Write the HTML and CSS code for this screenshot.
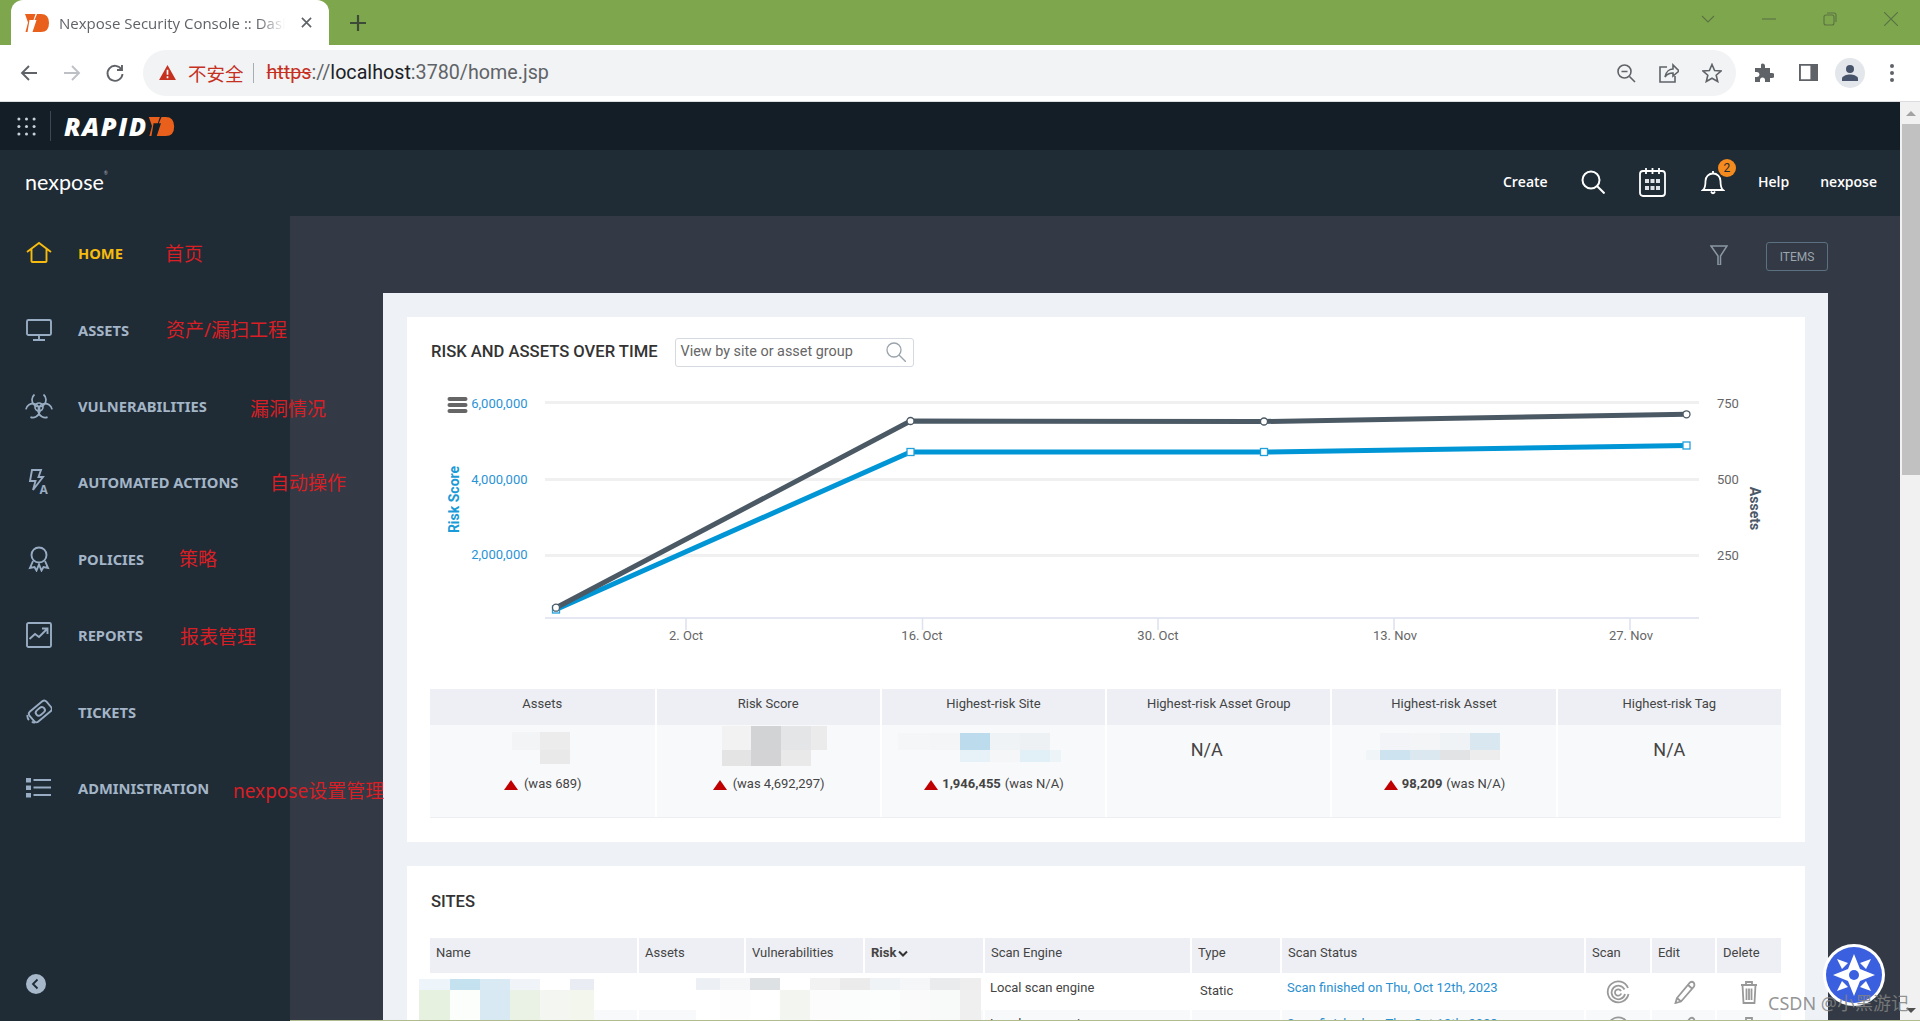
FILE: index.html
```html
<!DOCTYPE html>
<html lang="en">
<head>
<meta charset="utf-8">
<title>Nexpose Security Console :: Dashboard</title>
<link rel="stylesheet" href="styles.css">
</head>
<body>
<svg class="defs" width="0" height="0">
  <defs>
    <g id="i-r7"><path d="M0 0H10.500L8.500 6H4.500L2.500 18H0.500L3 8.500Z"/><path d="M12 0H16Q24 0 24 9T16 18H7.500L11.500 6H9.500Z"/></g>
    <g id="i-scan"><path d="M22 8A10.500 10.500 0 1 0 22.500 14M18.500 9.500A6.800 6.800 0 1 0 19 14M15 11A3.200 3.200 0 1 0 15.200 13.500"/></g>
    <g id="i-edit"><path d="M5 18L18 2.500Q20 1 21.500 2.500T22 6.500L9 21.500L3.500 23ZM5 18L9 21.500M16 5L20 8.500"/></g>
    <g id="i-trash"><path d="M4 5H20M9 5V2H15V5M5.500 5L6.500 23H17.500L18.500 5M9.500 8.500V20M12 8.500V20M14.500 8.500V20"/></g>
    <path id="i-lobe" d="M10.500 1.500A7 7 0 1 0 19.500 1.500"/>
  </defs>
</svg>
<header class="tabstrip">
  <div class="tab">
    <svg class="favicon" viewBox="0 0 24 18"><use href="#i-r7"/></svg>
    <span class="tab-title">Nexpose Security Console :: Dashboard</span>
    <svg class="tab-close" viewBox="0 0 12 12"><path d="M1 1L11 11M11 1L1 11"/></svg>
  </div>
  <svg class="tab-new" viewBox="0 0 16 16"><path d="M8 0V16M0 8H16"/></svg>
  <div class="win-controls">
    <svg viewBox="0 0 14 14"><path d="M1 4L7 10L13 4"/></svg>
    <svg viewBox="0 0 14 14"><path d="M0 7H14"/></svg>
    <svg viewBox="0 0 14 14"><rect x="1" y="3" width="10" height="10" rx="2"/><path d="M4 1H11Q13 1 13 3V10"/></svg>
    <svg viewBox="0 0 14 14"><path d="M0 0L14 14M14 0L0 14"/></svg>
  </div>
</header>
<div class="toolbar">
  <svg class="tb-icon" viewBox="0 0 20 20"><path d="M18 10H3M10 3L3 10L10 17"/></svg>
  <svg class="tb-icon tb-off" viewBox="0 0 20 20"><path d="M2 10H17M10 3L17 10L10 17"/></svg>
  <svg class="tb-icon" viewBox="0 0 20 20"><path d="M16.500 6.500A7.500 7.500 0 1 0 17.500 11M17 2V7H12"/></svg>
  <div class="omnibox">
    <svg class="warn" viewBox="0 0 18 16"><path d="M9 0L18 16H0Z"/><path class="warn-mark" d="M9 5V10.500M9 12V14"/></svg>
    <span class="insecure">不安全</span>
    <span class="omni-sep"></span>
    <span class="url"><span class="url-https">https</span>://<span class="url-host">localhost</span>:3780/home.jsp</span>
    <div class="omni-actions">
      <svg viewBox="0 0 20 20"><circle cx="8.500" cy="8.500" r="6.500"/><path d="M13.500 13.500L19 19M5.500 8.500H11.500"/></svg>
      <svg viewBox="0 0 20 20"><path d="M8 4H1V19H16V13M6 14C7 8 11 6 14 6V2L20 8L14 13V10C11 10 8 11 6 14Z"/></svg>
      <svg viewBox="0 0 20 20"><path d="M10 1.500L12.600 7.500L19 8L14.200 12.200L15.700 18.500L10 15.200L4.300 18.500L5.800 12.200L1 8L7.400 7.500Z"/></svg>
    </div>
  </div>
  <svg class="ext" viewBox="0 0 20 20"><path d="M7 1.500A2.200 2.200 0 0 1 11 3V5H16V10H18A2.500 2.500 0 0 1 18 15H16V19H11V17A2.500 2.500 0 0 0 6 17V19H1V14H3A2.500 2.500 0 0 0 3 9H1V5H7Z"/></svg>
  <svg class="sidepanel-icon" viewBox="0 0 20 20"><path fill-rule="evenodd" d="M0 1H20V19H0ZM2 3V17H12V3Z"/></svg>
  <div class="avatar"><svg viewBox="0 0 20 20"><circle cx="10" cy="6" r="4"/><path d="M2 18V15.500C2 13 7 11.500 10 11.500S18 13 18 15.500V18Z"/></svg></div>
  <svg class="dots" viewBox="0 0 4 20"><circle cx="2" cy="3" r="2"/><circle cx="2" cy="10" r="2"/><circle cx="2" cy="17" r="2"/></svg>
</div>

<div class="viewport">
  <div class="page">
    <div class="topbar">
      <svg class="grid-icon" viewBox="0 0 20 20"><g><circle cx="2" cy="2" r="1.600"/><circle cx="10" cy="2" r="1.600"/><circle cx="18" cy="2" r="1.600"/><circle cx="2" cy="10" r="1.600"/><circle cx="10" cy="10" r="1.600"/><circle cx="18" cy="10" r="1.600"/><circle cx="2" cy="18" r="1.600"/><circle cx="10" cy="18" r="1.600"/><circle cx="18" cy="18" r="1.600"/></g></svg>
      <span class="topbar-sep"></span>
      <span class="rapid">RAPID</span>
      <svg class="rapid-mark" viewBox="0 0 24 18"><use href="#i-r7"/></svg>
    </div>
    <div class="navbar">
      <span class="brand">nexpose<sup class="brand-r">®</sup></span>
      <div class="nav-right">
        <span class="nav-text nav-create">Create</span>
        <svg class="nav-search" viewBox="0 0 24 24"><circle cx="10" cy="10" r="8.500"/><path d="M16 16L23.500 23.500"/></svg>
        <svg class="nav-cal" viewBox="0 0 27 29"><rect x="1" y="3" width="25" height="25" rx="3"/><path d="M7 0V6M13.500 0V6M20 0V6"/><g class="cal-cells"><rect x="6" y="11" width="4" height="4"/><rect x="11.500" y="11" width="4" height="4"/><rect x="17" y="11" width="4" height="4"/><rect x="6" y="18" width="4" height="4"/><rect x="11.500" y="18" width="4" height="4"/><rect x="17" y="18" width="4" height="4"/></g></svg>
        <div class="bell-wrap">
          <svg class="nav-bell" viewBox="0 0 24 25"><path d="M2 20C4.500 18 4.500 15 4.500 11A7.500 7.500 0 0 1 19.500 11C19.500 15 19.500 18 22 20ZM12 1V3.500M10 21.500Q12 25 14 21.500"/></svg>
          <span class="bell-badge">2</span>
        </div>
        <span class="nav-text nav-help">Help</span>
        <span class="nav-text nav-user">nexpose</span>
      </div>
    </div>
    <div class="body-row">
      <aside class="sidebar">
        <nav class="side-nav">
          <a class="side-item side-active">
            <svg class="side-icon" viewBox="0 0 26 24"><path d="M1 11L13 2L25 11M5.500 8V20.500Q5.500 21 6.500 21H19.500Q20.500 21 20.500 20.500V8"/></svg>
            <span>HOME</span><span class="note note-home">首页</span>
          </a>
          <a class="side-item">
            <svg class="side-icon" viewBox="0 0 26 24"><rect x="1" y="2" width="24" height="15" rx="1.500"/><path d="M13 17V21M7 22H19"/></svg>
            <span>ASSETS</span><span class="note note-assets">资产/漏扫工程</span>
          </a>
          <a class="side-item">
            <svg class="side-icon side-bio" viewBox="0 0 30 26"><circle cx="15" cy="14" r="4"/><use href="#i-lobe"/><use href="#i-lobe" transform="rotate(120 15 14)"/><use href="#i-lobe" transform="rotate(240 15 14)"/></svg>
            <span>VULNERABILITIES</span><span class="note note-vuln">漏洞情况</span>
          </a>
          <a class="side-item">
            <svg class="side-icon" viewBox="0 0 26 26"><path d="M6 1H15L12.500 8H17L7 21L9.500 12H4Z"/><text class="icon-a" x="13.500" y="25">A</text></svg>
            <span>AUTOMATED ACTIONS</span><span class="note note-auto">自动操作</span>
          </a>
          <a class="side-item">
            <svg class="side-icon" viewBox="0 0 26 26"><circle cx="13" cy="9" r="7.500"/><path d="M7 15L4 22L8.500 21L10.500 24.500L13 18.500L15.500 24.500L17.500 21L22 22L19 15"/></svg>
            <span>POLICIES</span><span class="note note-pol">策略</span>
          </a>
          <a class="side-item">
            <svg class="side-icon" viewBox="0 0 26 26"><rect x="1" y="1" width="24" height="24" rx="1.500"/><path d="M3.500 17L9 12L13 15L21 7M16 6.500H21.500V12"/></svg>
            <span>REPORTS</span><span class="note note-rep">报表管理</span>
          </a>
          <a class="side-item">
            <svg class="side-icon" viewBox="0 0 26 24"><g transform="rotate(-40 14 11)"><rect x="3" y="5" width="22" height="13" rx="3"/><rect x="9" y="8.500" width="10" height="6" rx="3"/></g><path d="M1.500 15Q1 18 3 20M6 21.500Q7 23 9 22.500"/></svg>
            <span>TICKETS</span>
          </a>
          <a class="side-item">
            <svg class="side-icon side-admin" viewBox="0 0 26 20"><rect x="0" y="0" width="5" height="4.500"/><rect x="0" y="7.500" width="5" height="4.500"/><rect x="0" y="15" width="5" height="4.500"/><rect x="7.500" y="1" width="17.500" height="2"/><rect x="7.500" y="8.500" width="17.500" height="2"/><rect x="7.500" y="16" width="17.500" height="2"/></svg>
            <span>ADMINISTRATION</span><span class="note note-admin">nexpose设置管理</span>
          </a>
        </nav>
        <button class="collapse"><svg viewBox="0 0 20 20"><path d="M11.500 5.500L7 10L11.500 14.500"/></svg></button>
      </aside>

      <main class="content">
        <div class="content-tools">
          <svg class="filter" viewBox="0 0 18 20"><path d="M1 1H17L10.500 11V20H8V11Z"/></svg>
          <button class="items-btn">ITEMS</button>
        </div>
        <div class="panel">
          <section class="card card-risk">
            <div class="risk-head">
              <h2 class="card-title">RISK AND ASSETS OVER TIME</h2>
              <div class="site-search">
                <span>View by site or asset group</span>
                <svg viewBox="0 0 20 20"><circle cx="8" cy="8" r="7"/><path d="M13 13L20 20"/></svg>
              </div>
            </div>
            <svg class="chart" viewBox="407 367 1398 322" width="1398" height="322">
              <g class="grid">
                <path d="M545 402.500H1699M545 479.500H1699M545 555.500H1699"/>
              </g>
              <path class="axis" d="M545 618H1699M686 618V630M922.500 618V630M1158 618V630M1394 618V630M1630 618V630"/>
              <g class="hamburger">
                <rect x="447.500" y="397" width="20" height="4" rx="2"/>
                <rect x="447.500" y="403" width="20" height="4" rx="2"/>
                <rect x="447.500" y="409" width="20" height="4" rx="2"/>
              </g>
              <g class="y-left">
                <text x="527.500" y="408">6,000,000</text>
                <text x="527.500" y="483.500">4,000,000</text>
                <text x="527.500" y="558.500">2,000,000</text>
              </g>
              <g class="y-right">
                <text x="1717" y="408">750</text>
                <text x="1717" y="484">500</text>
                <text x="1717" y="560">250</text>
              </g>
              <g class="x-labels">
                <text x="686" y="640">2. Oct</text>
                <text x="922" y="640">16. Oct</text>
                <text x="1158" y="640">30. Oct</text>
                <text x="1395" y="640">13. Nov</text>
                <text x="1631" y="640">27. Nov</text>
              </g>
              <text class="title-risk" transform="translate(459 499.500) rotate(-90)">Risk Score</text>
              <text class="title-assets" transform="translate(1750 508.500) rotate(90)">Assets</text>
              <path class="line-blue" d="M556 609.500L910.500 452L1264 452L1686.500 445.500"/>
              <path class="line-dark" d="M556 607.700L910.500 421L1264 421.500L1686.500 414.300"/>
              <g class="mk-blue">
                <rect x="552.500" y="606" width="7" height="7"/>
                <rect x="907" y="448.500" width="7" height="7"/>
                <rect x="1260.500" y="448.500" width="7" height="7"/>
                <rect x="1683" y="442" width="7" height="7"/>
              </g>
              <g class="mk-dark">
                <circle cx="556" cy="607.700" r="3.500"/>
                <circle cx="910.500" cy="421" r="3.500"/>
                <circle cx="1264" cy="421.500" r="3.500"/>
                <circle cx="1686.500" cy="414.300" r="3.500"/>
              </g>
            </svg>
            <div class="stats">
              <div class="stat">
                <div class="stat-head">Assets</div>
                <div class="stat-body">
                  <svg class="mosaic mosaic-a" viewBox="0 0 58 32"><rect width="28" height="18" fill="#f3f4f5"/><rect x="28" width="30" height="18" fill="#ececed"/><rect x="28" y="18" width="30" height="14" fill="#e9e9ea"/></svg>
                  <div class="delta"><i class="up"></i><span>(was 689)</span></div>
                </div>
              </div>
              <div class="stat">
                <div class="stat-head">Risk Score</div>
                <div class="stat-body">
                  <svg class="mosaic mosaic-b" viewBox="0 0 105 40"><rect width="29" height="24" fill="#f2f2f3"/><rect x="29" width="30" height="24" fill="#d2d3d5"/><rect x="59" width="30" height="24" fill="#e4e5e6"/><rect x="89" width="16" height="24" fill="#ebebec"/><rect y="24" width="29" height="16" fill="#e4e4e5"/><rect x="29" y="24" width="30" height="16" fill="#d3d3d5"/><rect x="59" y="24" width="30" height="16" fill="#e9e9ea"/></svg>
                  <div class="delta"><i class="up"></i><span>(was 4,692,297)</span></div>
                </div>
              </div>
              <div class="stat">
                <div class="stat-head">Highest-risk Site</div>
                <div class="stat-body">
                  <svg class="mosaic mosaic-c" viewBox="0 0 163 29"><rect width="32" height="17" fill="#f5f6f7"/><rect x="32" width="30" height="17" fill="#f4f5f7"/><rect x="62" width="30" height="17" fill="#bcdcee"/><rect x="92" width="30" height="17" fill="#f0f3f5"/><rect x="122" width="30" height="17" fill="#eef1f3"/><rect x="32" y="17" width="30" height="12" fill="#f7f9fb"/><rect x="62" y="17" width="30" height="12" fill="#e6f2f7"/><rect x="92" y="17" width="30" height="12" fill="#f4f6f8"/><rect x="122" y="17" width="30" height="12" fill="#e1eff6"/><rect x="152" y="17" width="11" height="12" fill="#ecf4f8"/></svg>
                  <div class="delta"><i class="up"></i><b>1,946,455</b><span>(was N/A)</span></div>
                </div>
              </div>
              <div class="stat">
                <div class="stat-head">Highest-risk Asset Group</div>
                <div class="stat-body stat-na stat-na-left">N/A</div>
              </div>
              <div class="stat">
                <div class="stat-head">Highest-risk Asset</div>
                <div class="stat-body">
                  <svg class="mosaic mosaic-d" viewBox="0 0 134 27"><rect x="14" width="30" height="17" fill="#f2f4f7"/><rect x="44" width="30" height="17" fill="#f4f5f7"/><rect x="74" width="30" height="17" fill="#eff3f6"/><rect x="104" width="30" height="17" fill="#d9e7f1"/><rect y="17" width="14" height="10" fill="#f0f5f8"/><rect x="14" y="17" width="30" height="10" fill="#cde3ef"/><rect x="44" y="17" width="30" height="10" fill="#dbe8f0"/><rect x="74" y="17" width="30" height="10" fill="#e2e3e4"/><rect x="104" y="17" width="30" height="10" fill="#ededee"/></svg>
                  <div class="delta"><i class="up"></i><b>98,209</b><span>(was N/A)</span></div>
                </div>
              </div>
              <div class="stat">
                <div class="stat-head">Highest-risk Tag</div>
                <div class="stat-body stat-na">N/A</div>
              </div>
            </div>
          </section>

          <section class="card card-sites">
            <h2 class="card-title sites-title">SITES</h2>
            <div class="sites">
              <div class="th">Name</div>
              <div class="th">Assets</div>
              <div class="th">Vulnerabilities</div>
              <div class="th th-sort">Risk<svg viewBox="0 0 10 8"><path d="M1 1.500L5 5.500L9 1.500"/></svg></div>
              <div class="th">Scan Engine</div>
              <div class="th">Type</div>
              <div class="th">Scan Status</div>
              <div class="th">Scan</div>
              <div class="th">Edit</div>
              <div class="th">Delete</div>

              <div class="td"></div><div class="td"></div><div class="td"></div><div class="td"></div>
              <div class="td td-top">Local scan engine</div>
              <div class="td td-low">Static</div>
              <div class="td td-top"><a class="link">Scan finished on Thu, Oct 12th, 2023</a></div>
              <div class="td td-icon"><svg class="act" viewBox="0 0 24 24"><use href="#i-scan"/></svg></div>
              <div class="td td-icon"><svg class="act" viewBox="0 0 24 24"><use href="#i-edit"/></svg></div>
              <div class="td td-icon"><svg class="act" viewBox="0 0 24 24"><use href="#i-trash"/></svg></div>

              <div class="td alt"></div><div class="td alt"></div><div class="td alt"></div><div class="td alt"></div>
              <div class="td alt td-top">Local scan engine</div>
              <div class="td alt td-low">Static</div>
              <div class="td alt td-top"><a class="link">Scan finished on Thu, Oct 12th, 2023</a></div>
              <div class="td alt td-icon"><svg class="act" viewBox="0 0 24 24"><use href="#i-scan"/></svg></div>
              <div class="td alt td-icon"><svg class="act" viewBox="0 0 24 24"><use href="#i-edit"/></svg></div>
              <div class="td alt td-icon"><svg class="act" viewBox="0 0 24 24"><use href="#i-trash"/></svg></div>

              <svg class="blur blur-name" viewBox="0 0 175 41"><rect width="31" height="11" fill="#eef5fa"/><rect x="31" width="30" height="11" fill="#c4e1f0"/><rect x="61" width="30" height="11" fill="#d9eaf5"/><rect x="91" width="30" height="11" fill="#f0f4f8"/><rect x="151" width="24" height="11" fill="#e9edf3"/><rect y="11" width="31" height="30" fill="#e7f1e0"/><rect x="31" y="11" width="30" height="30" fill="#fcfefc"/><rect x="61" y="11" width="30" height="30" fill="#d8e9f4"/><rect x="91" y="11" width="30" height="30" fill="#eaf2e6"/><rect x="121" y="11" width="30" height="30" fill="#f4f7f1"/><rect x="151" y="11" width="24" height="30" fill="#f3f6ec"/></svg>
              <svg class="blur blur-vals" viewBox="0 0 285 42"><rect width="24" height="12" fill="#eceff3"/><rect x="24" width="30" height="12" fill="#f5f6f8"/><rect x="54" width="30" height="12" fill="#dee1e4"/><rect x="84" width="30" height="12" fill="#fff"/><rect x="114" width="30" height="12" fill="#f2f2f3"/><rect x="144" width="30" height="12" fill="#ebebec"/><rect x="174" width="30" height="12" fill="#f0f3f6"/><rect x="204" width="30" height="12" fill="#f5f6f8"/><rect x="234" width="30" height="12" fill="#eaebec"/><rect x="264" width="21" height="12" fill="#eeeeef"/><rect y="12" width="54" height="30" fill="#fff"/><rect x="24" y="12" width="30" height="30" fill="#fdfdfe"/><rect x="54" y="12" width="30" height="30" fill="#fff"/><rect x="84" y="12" width="30" height="30" fill="#f3f6f0"/><rect x="114" y="12" width="30" height="30" fill="#fcfcfc"/><rect x="144" y="12" width="30" height="30" fill="#fbfcfc"/><rect x="174" y="12" width="30" height="30" fill="#fcfdfd"/><rect x="204" y="12" width="30" height="30" fill="#fafafa"/><rect x="234" y="12" width="30" height="30" fill="#f8f9f9"/><rect x="264" y="12" width="21" height="30" fill="#efefef"/></svg>
            </div>
          </section>
        </div>
      </main>
    </div>
  </div>
  <div class="scrollbar">
    <i class="sb-up"></i>
    <div class="sb-thumb"></div>
    <i class="sb-down"></i>
  </div>
</div>

<div class="float-badge">
  <svg viewBox="-31 -31 62 62"><circle r="31" fill="#fff"/><circle r="28" fill="#3a5fdf"/><path fill="#fff" d="M0-21L6-6L21 0L6 6L0 21L-6 6L-21 0L-6-6Z"/><g fill="#fff"><path d="M-17-16L-6-12L-12-6Z"/><path d="M17-16L6-12L12-6Z"/><path d="M-17 16L-6 12L-12 6Z"/><path d="M17 16L6 12L12 6Z"/></g><circle r="5" fill="#3a5fdf"/></svg>
</div>
<div class="watermark">CSDN @小黑游记</div>
<div class="bottom-edge"></div>
</body>
</html>
```

FILE: styles.css
```css
* { box-sizing: border-box; }
html, body { margin: 0; padding: 0; }
body {
  width: 1920px;
  height: 1021px;
  overflow: hidden;
  position: relative;
  background: #fff;
  font-family: Roboto, "Liberation Sans", sans-serif;
  color: #444;
}
svg { display: block; flex: none; }
.defs { position: absolute; }

/* browser chrome */
.tabstrip {
  height: 45px;
  background: #7ea64d;
  display: flex;
  align-items: center;
  position: relative;
}
.tab {
  margin-left: 11px;
  width: 318px;
  height: 45px;
  background: #fff;
  border-radius: 12px 12px 0 0;
  display: flex;
  align-items: center;
  padding-left: 14px;
}
.favicon { width: 24px; height: 18px; fill: #e8601c; }
.tab-title {
  margin-left: 10px;
  width: 226px;
  font: 15px "Open Sans", sans-serif;
  color: #5f6368;
  white-space: nowrap;
  overflow: hidden;
  -webkit-mask-image: linear-gradient(to right, #000 88%, transparent 100%);
  mask-image: linear-gradient(to right, #000 88%, transparent 100%);
}
.tab-close { width: 11px; height: 11px; margin-left: 16px; fill: none; stroke: #5f6368; stroke-width: 1.800; }
.tab-new { width: 16px; height: 16px; margin-left: 21px; fill: none; stroke: #3d4a38; stroke-width: 2.200; }
.win-controls {
  position: absolute;
  right: 22px;
  top: 12px;
  display: flex;
  gap: 47px;
}
.win-controls svg { width: 14px; height: 14px; fill: none; stroke: #5a7245; stroke-width: 1.100; }

.toolbar {
  height: 57px;
  background: #fff;
  border-bottom: 1px solid #dadce0;
  display: flex;
  align-items: center;
  padding: 0 0 1px 19px;
}
.tb-icon { width: 20px; height: 20px; margin-right: 23px; fill: none; stroke: #5f6368; stroke-width: 1.900; }
.tb-off { stroke: #bdc1c6; }
.omnibox {
  margin-left: -5px;
  width: 1593px;
  height: 46px;
  background: #f1f3f4;
  border-radius: 23px;
  display: flex;
  align-items: center;
  padding-left: 16px;
}
.warn { width: 17px; height: 15px; fill: #c5301f; }
.warn-mark { stroke: #fff; stroke-width: 1.800; fill: none; }
.insecure { margin-left: 12px; font: 18.500px "Noto Sans CJK SC", sans-serif; color: #c5301f; line-height: 24px; }
.omni-sep { width: 1px; height: 20px; background: #a9acb0; margin-left: 9px; }
.url { margin-left: 13px; font: 19.700px Roboto, sans-serif; color: #5f6368; white-space: nowrap; }
.url-https { color: #c5301f; text-decoration: line-through; }
.url-host { color: #202124; }
.omni-actions {
  margin-left: auto;
  display: flex;
  gap: 23px;
  padding-right: 14px;
}
.omni-actions svg { width: 20px; height: 20px; fill: none; stroke: #5f6368; stroke-width: 1.600; }
.ext { width: 20px; height: 20px; margin-left: 18px; fill: #5f6368; }
.sidepanel-icon { width: 19px; height: 19px; margin-left: 25px; fill: #5f6368; }
.avatar {
  width: 30px;
  height: 30px;
  border-radius: 50%;
  background: #e3e6ea;
  margin-left: 17px;
  display: flex;
  align-items: center;
  justify-content: center;
}
.avatar svg { width: 20px; height: 20px; fill: #47536a; }
.dots { width: 4px; height: 20px; margin-left: 25px; fill: #5f6368; }

/* page */
.viewport { display: flex; height: 919px; overflow: hidden; }
.page { width: 1900px; display: flex; flex-direction: column; }
.topbar {
  height: 48px;
  flex: none;
  background: #141e27;
  display: flex;
  align-items: center;
  padding-left: 17px;
}
.grid-icon { width: 19px; height: 19px; fill: #c9d1d8; }
.topbar-sep { width: 1px; height: 30px; background: #3d4852; margin-left: 14px; }
.rapid {
  margin-left: 13px;
  font: italic 800 25.500px "Open Sans", sans-serif;
  color: #fff;
  letter-spacing: 1.500px;
}
.rapid-mark { width: 27px; height: 19px; fill: #e8601c; }

.navbar {
  height: 66px;
  flex: none;
  background: #1f2b35;
  display: flex;
  align-items: center;
  padding-left: 25px;
}
.brand { font: 400 21.500px Lato, sans-serif; color: #fff; display: flex; margin-top: -2px; }
.brand-r { font-size: 5px; line-height: 8px; color: #aab; }
.nav-right { margin: -2px 0 0 auto; display: flex; align-items: center; color: #fff; font: 600 14px "Open Sans", sans-serif; }
.nav-text { margin-bottom: 2px; }
.nav-create { width: 44px; white-space: nowrap; }
.nav-search { width: 24px; height: 24px; margin-left: 34px; fill: none; stroke: #fff; stroke-width: 2; }
.nav-cal { width: 27px; height: 29px; margin-left: 34px; fill: none; stroke: #fff; stroke-width: 1.800; }
.cal-cells rect { fill: #dfe3e7; stroke: none; }
.bell-wrap { position: relative; margin-left: 35px; }
.nav-bell { width: 24px; height: 25px; fill: none; stroke: #fff; stroke-width: 1.800; }
.bell-badge {
  position: absolute;
  left: 17px;
  top: -11px;
  width: 18px;
  height: 18px;
  border-radius: 50%;
  background: #f58a1f;
  color: #1f2b35;
  font: 400 12px/18px Roboto, sans-serif;
  text-align: center;
}
.nav-help { margin-left: 33px; }
.nav-user { margin-left: 31px; margin-right: 23px; }

.body-row { flex: 1; display: flex; min-height: 0; }
.sidebar {
  width: 290px;
  flex: none;
  background: #1f2b35;
  display: flex;
  flex-direction: column;
  position: relative;
  z-index: 2;
}
.side-nav { display: flex; flex-direction: column; }
.side-item {
  height: 76.400px;
  display: flex;
  align-items: center;
  padding: 0 0 2px 26px;
  color: #a3b5c7;
  font: 700 14.700px "Noto Sans", sans-serif;
  position: relative;
  white-space: nowrap;
}
.side-icon {
  width: 26px;
  height: 26px;
  margin-right: 26px;
  fill: none;
  stroke: #98adc3;
  stroke-width: 1.900;
}
.side-bio { width: 30px; margin-left: -2px; margin-right: 24px; stroke-width: 1.700; }
.side-admin { height: 20px; fill: #98adc3; stroke: none; }
.icon-a { font: 700 12px "Noto Sans", sans-serif; fill: #98adc3; stroke: none; }
.side-active { color: #f6bb0e; }
.side-active .side-icon { stroke: #f6bb0e; }
.note {
  position: absolute;
  top: 50%;
  transform: translateY(-50%);
  font: 400 19px/26px "Noto Sans", "Noto Sans CJK SC", sans-serif;
  color: #d81f26;
}
.note-home { left: 165px; }
.note-assets { left: 166px; margin-top: -1px; }
.note-vuln { left: 250px; margin-top: 2px; }
.note-auto { left: 270px; }
.note-pol { left: 179px; margin-top: -1px; }
.note-rep { left: 180px; margin-top: 1px; }
.note-admin { left: 233px; margin-top: 2px; }
.collapse {
  margin: auto 0 27px 26px;
  width: 20px;
  height: 20px;
  border: 0;
  padding: 0;
  border-radius: 50%;
  background: #a6b8c9;
}
.collapse svg { width: 20px; height: 20px; fill: none; stroke: #1f2b35; stroke-width: 1.800; }

.content { flex: 1; background: #333a45; display: flex; flex-direction: column; min-width: 0; }
.content-tools {
  height: 77px;
  flex: none;
  display: flex;
  padding: 26px 72px 0 0;
  justify-content: flex-end;
  align-items: flex-start;
}
.filter { width: 18px; height: 20px; margin: 3px 38px 0 0; fill: none; stroke: #8b98a3; stroke-width: 1.500; }
.items-btn {
  width: 62px;
  height: 29px;
  border: 1px solid #5b7080;
  border-radius: 3px;
  background: transparent;
  color: #9aa5ae;
  font: 12px Roboto, sans-serif;
  padding: 0;
}
.panel {
  width: 1445px;
  margin-left: 93px;
  background: #eef1f5;
  padding: 24px 23px 0 24px;
  flex: 1;
}
.card { background: #fff; }
.card-risk { height: 525px; margin-bottom: 24px; }
.card-title { margin: 0; font: 500 16.600px/20px Roboto, sans-serif; color: #333; white-space: nowrap; }
.risk-head { display: flex; align-items: center; height: 50px; padding: 21px 0 0 24px; }
.risk-head .card-title { margin-top: -1px; }
.site-search {
  margin-left: 17px;
  width: 239px;
  height: 29px;
  border: 1px solid #d5d9e0;
  border-radius: 3px;
  display: flex;
  align-items: center;
  padding: 0 7px 2px 5px;
  font-size: 14.400px;
  color: #666;
}
.site-search svg { margin-left: auto; width: 20px; height: 20px; fill: none; stroke: #9aa3ab; stroke-width: 1.300; }

.chart { overflow: visible; }
.grid path { fill: none; stroke: #f0f0f0; stroke-width: 3; }
.axis { fill: none; stroke: #dde1f0; stroke-width: 1.500; }
.hamburger rect { fill: #666; }
.y-left text { font: 13px Roboto, sans-serif; fill: #2a93d5; text-anchor: end; }
.y-right text { font: 13px Roboto, sans-serif; fill: #666; }
.x-labels text { font: 13px Roboto, sans-serif; fill: #666; text-anchor: middle; }
.title-risk { font: 700 14px Roboto, sans-serif; fill: #1a9ad6; text-anchor: middle; }
.title-assets { font: 700 14px Roboto, sans-serif; fill: #4a5866; text-anchor: middle; }
.line-blue { fill: none; stroke: #0096d6; stroke-width: 5; }
.line-dark { fill: none; stroke: #4b5965; stroke-width: 5; }
.mk-blue rect { fill: #fff; stroke: #22a0da; stroke-width: 1.300; }
.mk-dark circle { fill: #fff; stroke: #4b5965; stroke-width: 1.300; }

.stats {
  margin: 0 24px 0 23px;
  display: grid;
  grid-template-columns: 224.500px repeat(5, 1fr);
  gap: 0 2px;
  height: 129px;
  border-bottom: 1px solid #edeff3;
}
.stat { display: flex; flex-direction: column; }
.stat-head {
  height: 36px;
  flex: none;
  background: #edeff4;
  font-size: 13px;
  line-height: 30px;
  text-align: center;
  color: #444;
}
.stat-body { flex: 1; background: #f8f9fb; position: relative; text-align: center; }
.stat-na { font-size: 18px; line-height: 50px; color: #444; }
.stat-na-left { padding-right: 24px; }
.mosaic { position: absolute; left: 50%; top: 8px; }
.mosaic-a { width: 58px; height: 32px; top: 7px; margin-left: -30px; }
.mosaic-b { width: 105px; height: 40px; top: 1px; margin-left: -46px; }
.mosaic-c { width: 163px; height: 29px; margin-left: -95px; }
.mosaic-d { width: 134px; height: 27px; margin-left: -78px; }
.delta {
  position: absolute;
  left: 1px;
  right: 0;
  top: 50px;
  display: flex;
  justify-content: center;
  align-items: center;
  gap: 4px;
  font-size: 13px;
  line-height: 18px;
  color: #444;
}
.delta b { font-weight: 700; }
.delta i + span { margin-left: 2px; }
.up {
  width: 0;
  height: 0;
  margin-top: 1px;
  border-left: 7.500px solid transparent;
  border-right: 7.500px solid transparent;
  border-bottom: 10px solid #c00000;
}

.sites-title { padding: 26px 0 0 24px; margin-bottom: 26px; }
.sites {
  margin: 0 24px 0 23px;
  display: grid;
  grid-template-columns: 207px 105px 117px 118px 205px 88px 302px 64px 63px 64px;
  grid-auto-rows: 36px;
  column-gap: 2px;
  position: relative;
  font-size: 13px;
}
.th {
  height: 35px;
  background: #edeff4;
  padding: 0 6px;
  line-height: 30px;
  white-space: nowrap;
  color: #444;
  display: flex;
  align-items: flex-start;
}
.th-sort { font-weight: 700; }
.th-sort svg { width: 10px; height: 8px; margin: 12px 0 0 2px; fill: none; stroke: #333; stroke-width: 2; }
.td { height: 36px; white-space: nowrap; padding: 6px 5px 0; line-height: 16px; background: #fff; }
.td-low { padding-top: 9px; padding-left: 8px; }
.td-icon { padding: 6px 0 0; display: flex; justify-content: center; }
.alt { background: #f8f9fb; }
.link { color: #2a8fd0; }
.act { width: 24px; height: 24px; fill: none; stroke: #999; stroke-width: 1.800; }
.blur { position: absolute; }
.blur-name { left: -11px; top: 41px; width: 175px; height: 41px; }
.blur-vals { left: 266px; top: 40px; width: 285px; height: 42px; }

/* scrollbar */
.scrollbar {
  width: 20px;
  flex: none;
  background: #f1f1f1;
  display: flex;
  flex-direction: column;
  align-items: flex-end;
}
.sb-up, .sb-down { width: 18px; height: 22px; display: flex; align-items: center; justify-content: center; }
.sb-up::before {
  content: "";
  border-left: 5px solid transparent;
  border-right: 5px solid transparent;
  border-bottom: 5px solid #a3a3a3;
}
.sb-down { margin-top: auto; }
.sb-down::before {
  content: "";
  border-left: 5px solid transparent;
  border-right: 5px solid transparent;
  border-top: 5px solid #505050;
}
.sb-thumb { width: 18px; height: 351px; background: #c1c1c1; }

/* overlays */
.float-badge { position: absolute; left: 1823px; top: 944px; width: 62px; height: 62px; }
.float-badge svg { width: 62px; height: 62px; }
.watermark {
  position: absolute;
  left: 1768px;
  top: 990px;
  font: 18px/26px "Noto Sans", "Noto Sans CJK SC", sans-serif;
  color: rgba(130, 130, 130, 0.85);
  white-space: nowrap;
}
.bottom-edge { position: absolute; left: 0; right: 0; bottom: 0; height: 1px; background: #b0bc8e; }
```
